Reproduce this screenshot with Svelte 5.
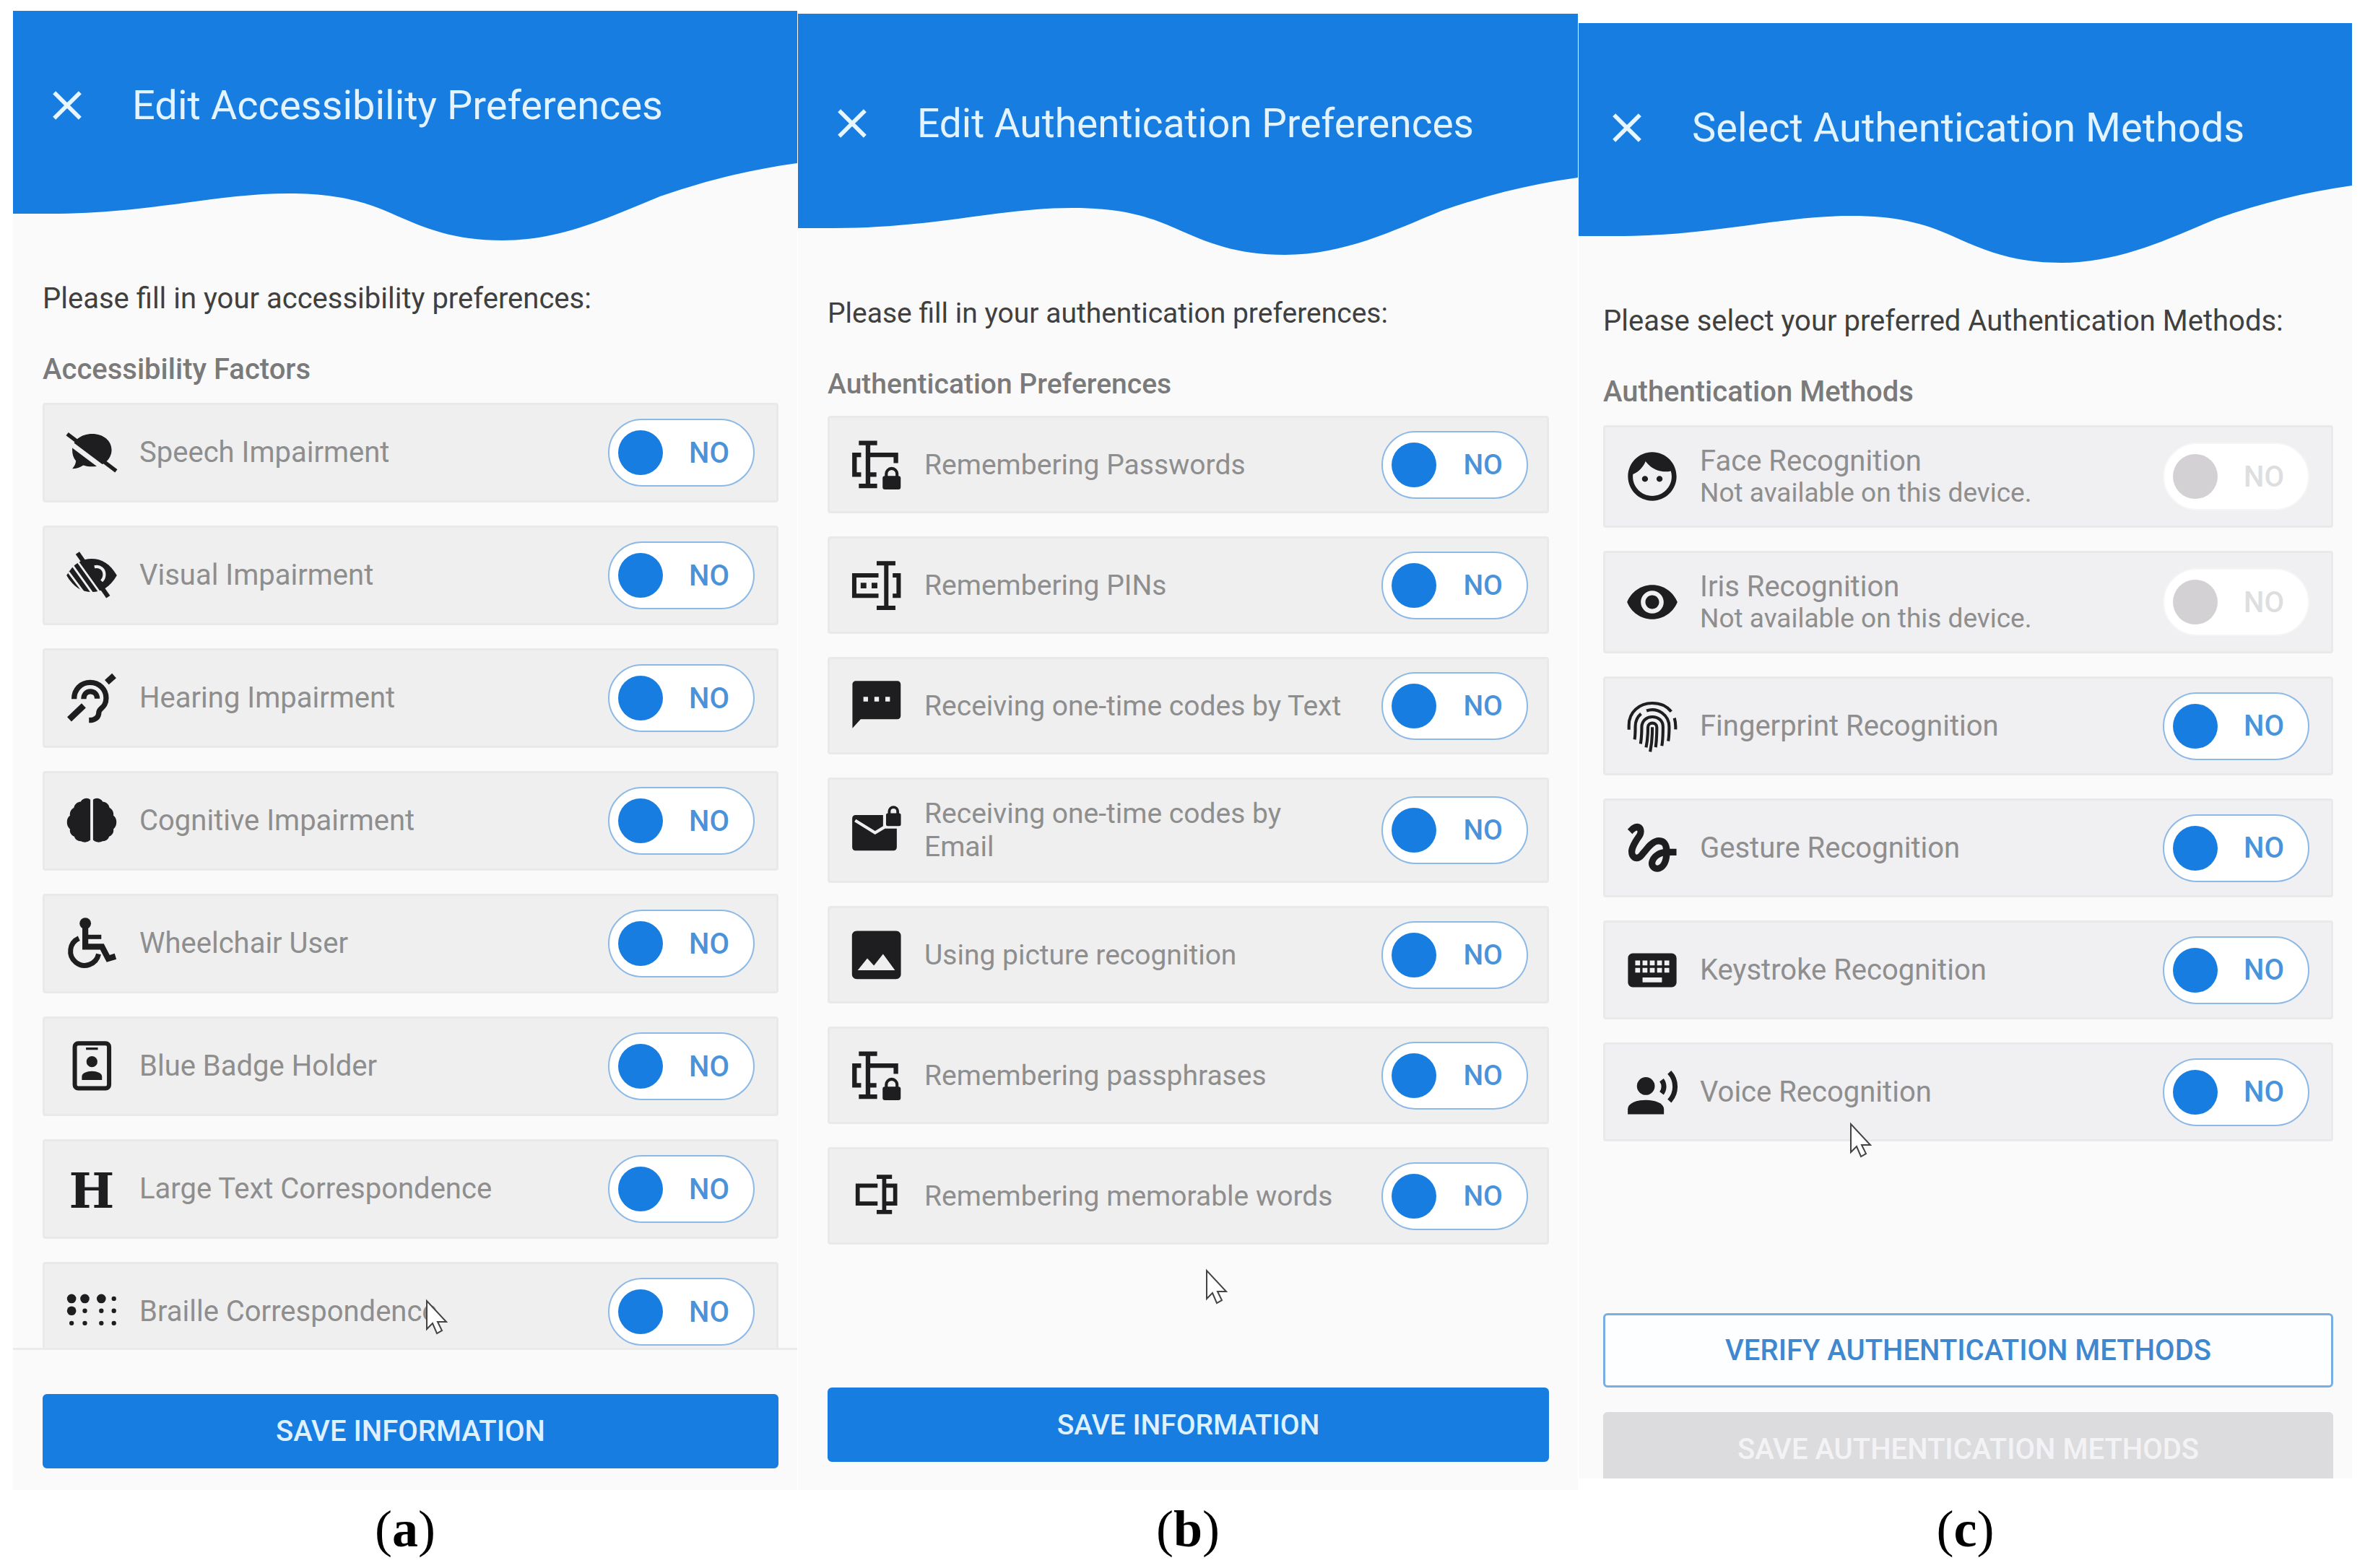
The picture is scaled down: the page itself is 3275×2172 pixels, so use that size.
<script lang="ts">
  type Item = { icon: string; label: string; note?: string; on?: boolean };
  type Action = { text: string; kind: 'solid' | 'outline' | 'disabled' };
  type Screen = {
    key: string;
    title: string;
    intro: string;
    heading: string;
    items: Item[];
    actions: Action[];
    pointer: { x: number; y: number };
  };

  const screens: Screen[] = $state([
    {
      key: 'a',
      title: 'Edit Accessibility Preferences',
      intro: 'Please fill in your accessibility preferences:',
      heading: 'Accessibility Factors',
      items: [
        { icon: 'speech', label: 'Speech Impairment' },
        { icon: 'visual', label: 'Visual Impairment' },
        { icon: 'hearing', label: 'Hearing Impairment' },
        { icon: 'brain', label: 'Cognitive Impairment' },
        { icon: 'wheelchair', label: 'Wheelchair User' },
        { icon: 'badge', label: 'Blue Badge Holder' },
        { icon: 'large-text', label: 'Large Text Correspondence' },
        { icon: 'braille', label: 'Braille Correspondence' },
      ],
      actions: [{ text: 'SAVE INFORMATION', kind: 'solid' }],
      pointer: { x: 571, y: 1784 },
    },
    {
      key: 'b',
      title: 'Edit Authentication Preferences',
      intro: 'Please fill in your authentication preferences:',
      heading: 'Authentication Preferences',
      items: [
        { icon: 'password', label: 'Remembering Passwords' },
        { icon: 'pin', label: 'Remembering PINs' },
        { icon: 'chat', label: 'Receiving one-time codes by Text' },
        { icon: 'mail', label: 'Receiving one-time codes by Email' },
        { icon: 'picture', label: 'Using picture recognition' },
        { icon: 'password', label: 'Remembering passphrases' },
        { icon: 'words', label: 'Remembering memorable words' },
      ],
      actions: [{ text: 'SAVE INFORMATION', kind: 'solid' }],
      pointer: { x: 564, y: 1738 },
    },
    {
      key: 'c',
      title: 'Select Authentication Methods',
      intro: 'Please select your preferred Authentication Methods:',
      heading: 'Authentication Methods',
      items: [
        { icon: 'face', label: 'Face Recognition', note: 'Not available on this device.' },
        { icon: 'eye', label: 'Iris Recognition', note: 'Not available on this device.' },
        { icon: 'fingerprint', label: 'Fingerprint Recognition' },
        { icon: 'gesture', label: 'Gesture Recognition' },
        { icon: 'keyboard', label: 'Keystroke Recognition' },
        { icon: 'voice', label: 'Voice Recognition' },
      ],
      actions: [
        { text: 'VERIFY AUTHENTICATION METHODS', kind: 'outline' },
        { text: 'SAVE AUTHENTICATION METHODS', kind: 'disabled' },
      ],
      pointer: { x: 375, y: 1522 },
    },
  ]);
</script>

{#snippet icon(name: string)}
  {#if name === 'gesture'}
    <svg class="icon" viewBox="1.8 2 20.4 20.4" aria-hidden="true">
      <path d="M4.59 6.89c.7-.71 1.4-1.35 1.71-1.22.5.2 0 1.03-.3 1.52-.25.42-2.86 3.89-2.86 6.31 0 1.28.48 2.34 1.34 2.98.75.56 1.74.73 2.64.46 1.07-.31 1.95-1.4 3.06-2.77 1.21-1.49 2.83-3.44 4.08-3.44 1.63 0 1.65 1.01 1.76 1.79-3.78.64-5.38 3.67-5.38 5.37 0 1.7 1.44 3.09 3.21 3.09 1.63 0 4.29-1.33 4.69-6.1H21v-2.5h-2.47c-.15-1.65-1.09-4.2-4.03-4.2-2.25 0-4.18 1.91-4.94 2.84-.58.73-2.06 2.48-2.29 2.72-.25.3-.68.84-1.11.84-.45 0-.72-.83-.36-1.92.35-1.09 1.4-2.86 1.85-3.52.78-1.14 1.3-1.92 1.3-3.28C8.95 3.69 7.31 3 6.44 3 5.12 3 3.97 4 3.72 4.25c-.36.36-.66.66-.88.93l1.75 1.71zm9.29 11.66c-.31 0-.74-.26-.74-.72 0-.6.73-2.2 2.87-2.76-.3 2.69-1.43 3.48-2.13 3.48z" />
    </svg>
  {:else if name === 'keyboard'}
    <svg class="icon" viewBox="0.7 0.7 22.6 22.6" aria-hidden="true">
      <path d="M20 5H4c-1.1 0-1.99.9-1.99 2L2 17c0 1.1.9 2 2 2h16c1.1 0 2-.9 2-2V7c0-1.1-.9-2-2-2zm-9 3h2v2h-2V8zm0 3h2v2h-2v-2zM8 8h2v2H8V8zm0 3h2v2H8v-2zm-1 2H5v-2h2v2zm0-3H5V8h2v2zm9 7H8v-2h8v2zm0-4h-2v-2h2v2zm0-3h-2V8h2v2zm3 3h-2v-2h2v2zm0-3h-2V8h2v2z" />
    </svg>
  {:else if name === 'face'}
    <svg class="icon" viewBox="0.7 0.7 22.6 22.6" aria-hidden="true">
      <path d="M9 11.75c-.69 0-1.25.56-1.25 1.25s.56 1.25 1.25 1.25 1.25-.56 1.25-1.25-.56-1.25-1.25-1.25zm6 0c-.69 0-1.25.56-1.25 1.25s.56 1.25 1.25 1.25 1.25-.56 1.25-1.25-.56-1.25-1.25-1.25zM12 2C6.48 2 2 6.48 2 12s4.48 10 10 10 10-4.48 10-10S17.52 2 12 2zm0 18c-4.41 0-8-3.59-8-8 0-.29.02-.58.05-.86 2.36-1.05 4.23-2.98 5.21-5.37C11.07 8.33 14.05 10 17.42 10c.78 0 1.53-.09 2.25-.26.21.71.33 1.47.33 2.26 0 4.41-3.59 8-8 8z" />
    </svg>
  {:else}
    <svg class="icon" viewBox="0 0 24 24" aria-hidden="true">
      {#if name === 'speech'}
        <path d="M12.2 3.8c4.9 0 8.5 3 8.5 7s-3.600 7.300-8.500 7.300c-1.400 0-2.800-.2-3.900-.6-1.400.9-2.900 1.500-4.800 1.500 1-1.200 1.500-2.200 1.600-3.400C3.900 14.200 3.500 12.600 3.500 10.800c0-4 3.800-7 8.700-7z" />
        <path class="gap" stroke-width="2.200" d="M.5 6.300l21 15.800" />
        <path class="gap" stroke-width="2.400" d="M2.500 3v6" />
        <path class="line" stroke-width="1.700" d="M1.300 3.800l21.400 16.200" />
      {:else if name === 'visual'}
        <path d="M1 12C4 6.800 7.700 4.700 12 4.700S20 6.800 23 12c-3 5.200-6.700 7.300-11 7.300S4 17.200 1 12z" />
        <path class="gap" stroke-width="1.300" d="M13.200 8.300c2.400-.6 4.300 1 4.300 3.300 0 1.300-.5 2.200-1.200 2.900" />
        <path class="gap" stroke-width=".9" d="M4.300 3.800l12.600 17.600M3.700 7.800l9 12.600M1.900 10.600l7.300 9.800" />
        <path class="line" stroke-width="2" d="M5.800 2.200l13.400 19.200" />
      {:else if name === 'hearing'}
        <g class="line" stroke-width="2.300">
          <path d="M4.300 12.400C4.300 8.200 7.300 5.200 11.300 5.200s7 3 7 6.800c0 4.300-3.200 4.300-3.200 6.400 0 2-1.600 3.300-4.300 3.300" />
          <path d="M8.500 12.400c0-2 1.200-3.300 2.900-3.300s3 1.200 3 3.100" />
          <path stroke-width="2.700" d="M2.200 21.300l6.300-6M18.600 5.100L21.800 2.200" />
        </g>
      {:else if name === 'brain'}
        <path d="M11.400 2.800v17.600c-1 1-2.700 1.300-4 .5-1.500.1-2.600-.7-3-2C2.900 18.200 2.300 17 2.500 15.600 1.500 14.800 1.100 13.600 1.200 12.300c0-1.100.5-2 1.300-2.600C2.300 8.200 3 6.900 4.200 6.300 4.500 4.700 5.700 3.700 7.200 3.600c.9-1.600 3.200-1.900 4.200-.8z" />
        <path d="M12.600 2.800v17.600c1 1 2.700 1.300 4 .5 1.500.1 2.600-.7 3-2 1.500-.7 2.100-1.900 1.900-3.300 1-.8 1.400-2 1.300-3.300 0-1.100-.5-2-1.300-2.600.2-1.500-.5-2.800-1.700-3.400-.3-1.600-1.500-2.600-3-2.700-.9-1.600-3.200-1.900-4.200-.8z" />
      {:else if name === 'wheelchair'}
        <circle cx="9.200" cy="3.200" r="2.500" />
        <path class="line" stroke-width="2.600" d="M9.200 5v8.400h7.300l2.700 5.200 3.200-1" />
        <path class="line" stroke-width="1.900" d="M9 9.100h7.200" />
        <path class="line" stroke-width="2.200" d="M6.400 9.700a6.200 6.200 0 1 0 8.600 6.900" />
      {:else if name === 'badge'}
        <rect class="line" stroke-width="1.900" x="4.600" y="2" width="15" height="19.600" rx="1.500" />
        <circle cx="12.100" cy="10" r="2.400" />
        <path d="M7.700 18v-1.600c0-1.400 2.200-2.300 4.400-2.300s4.400.9 4.400 2.300V18zM9.500 3.800h5.200v1H9.500z" />
      {:else if name === 'large-text'}
        <text class="slab" x="12" y="20.300" text-anchor="middle">H</text>
      {:else if name === 'braille'}
        <circle cx="3.200" cy="6.300" r="2" />
        <circle cx="9" cy="6.300" r="2" />
        <circle cx="16.200" cy="6.300" r="2" />
        <circle cx="21.700" cy="6.300" r="1" />
        <circle cx="3.200" cy="11.600" r="2" />
        <circle cx="9" cy="11.600" r="1" />
        <circle cx="16.200" cy="11.600" r="1" />
        <circle cx="21.700" cy="11.600" r="1" />
        <circle cx="3.200" cy="17" r="1" />
        <circle cx="9" cy="17" r="1" />
        <circle cx="16.200" cy="17" r="1" />
        <circle cx="21.700" cy="17" r="1" />
      {:else if name === 'password'}
        <path class="line" stroke-width="2" d="M4.200 2.400h8M8.200 2.400v18.800M4.200 21.200h8M5.200 7.600H2.300v8.600h2.900M8.200 7.600h12.200v3.600M8.200 16.200h3.700" />
        <rect x="14.600" y="16.800" width="7.900" height="5.900" rx="1" />
        <path class="line" stroke-width="1.300" d="M16.200 17.200v-1.300a2.350 2.350 0 0 1 4.700 0v1.300" />
      {:else if name === 'pin'}
        <path class="line" stroke-width="1.900" d="M12.800 7.600H2.200v8.900h10.600M19 7.600h2.600v8.900H19M12 2.300h8.200M16.200 2.300v19.500M12 21.800h8.200" />
        <path d="M5 10.800h2.500v2.500H5zM9.800 10.800h2.500v2.500H9.800z" />
      {:else if name === 'chat'}
        <path fill-rule="evenodd" d="M3 1h18c.9 0 1.500.6 1.500 1.500v13.800c0 .9-.6 1.500-1.500 1.500H5L1.400 21.700V2.500C1.400 1.600 2.100 1 3 1zM6.200 8v2h2V8zm4.800 0v2h2V8zm4.800 0v2h2V8z" />
      {:else if name === 'mail'}
        <path d="M2.800 5.400h12v5.900h6V19.400c0 .9-.6 1.500-1.500 1.500H2.800c-.9 0-1.500-.6-1.500-1.500V6.900c0-.9.600-1.500 1.500-1.500z" />
        <path class="gap" stroke-width="1.300" d="M2.600 7.700l8.700 5.400 4-2.400" />
        <rect x="16.100" y="4.600" width="6.500" height="5.600" rx=".8" />
        <path class="line" stroke-width="1.200" d="M17.500 5V3.800a1.850 1.850 0 0 1 3.700 0V5" />
      {:else if name === 'picture'}
        <path fill-rule="evenodd" d="M3.300 1.400h17.200c1.200 0 2.100.9 2.100 2.100v16.900c0 1.200-.9 2.100-2.100 2.100H3.300c-1.200 0-2.100-.9-2.100-2.100V3.500c0-1.200.9-2.100 2.100-2.100zM3.700 18.600h16.300l-5.200-7.100-4 5.100-2.900-3.200z" />
      {:else if name === 'words'}
        <path class="line" stroke-width="1.800" d="M12.400 7.400H3.700v7.800h8.700M15.300 7.400h4.800v7.800h-4.800M12 3.500h6.700M15.300 3.500v15.400M12 18.900h6.700" />
      {:else if name === 'eye'}
        <path d="M12 4.500C7 4.500 2.730 7.610 1 12c1.730 4.390 6 7.500 11 7.500s9.270-3.110 11-7.500c-1.730-4.390-6-7.500-11-7.500zM12 17c-2.760 0-5-2.240-5-5s2.240-5 5-5 5 2.240 5 5-2.240 5-5 5zm0-8c-1.660 0-3 1.340-3 3s1.340 3 3 3 3-1.340 3-3-1.340-3-3-3z" />
      {:else if name === 'fingerprint'}
        <g class="line" stroke-width="1.300">
          <path d="M1.800 13.500v-2C1.800 5.800 6.300 1.900 12 1.900c3.500 0 6.400 1.300 8.300 3.700M21.700 8.400c.4 1.400.6 3 .5 5" />
          <path d="M4.300 17.800c.3-2 .3-3.600.3-5.800 0-2.200 1-4.200 2.500-5.500M9.500 5.200c5-1.600 9.900 1.900 9.900 7.100 0 2.200 0 4-.4 6.200" />
          <path d="M6.900 19.700c.4-2.400.5-4.700.5-7.300 0-6 9.300-6 9.300-.2 0 3 0 5.400-.5 8.400" />
          <path d="M9.300 21.300c.6-2.900.8-5.700.8-8.800 0-2.500 3.900-2.500 3.900 0 0 3.100-.1 5.700-.5 8.700" />
          <path d="M12 12.400c.1 4-.2 7.200-.9 10.800" />
        </g>
      {:else if name === 'voice'}
        <circle cx="9.200" cy="9.300" r="3.900" />
        <path d="M1.300 21.600v-2.200c0-2.600 3.700-4 7.900-4s7.900 1.400 7.900 4v2.200z" />
        <path class="line" stroke-width="2.200" d="M16.100 6.700c1.300 1.700 1.300 4 0 5.700M19.500 3.300c3.300 3.500 3.300 9 0 12.500" />
      {/if}
    </svg>
  {/if}
{/snippet}

<main class="page">
  {#each screens as screen (screen.key)}
    <figure class="column {screen.key}">
      <section class="screen" aria-label={screen.title}>
        <header>
          <div class="bar">
            <button class="close" type="button" aria-label="Close">
              <svg viewBox="0 0 24 24" aria-hidden="true">
                <path d="M19 6.410L17.590 5 12 10.590 6.410 5 5 6.410 10.590 12 5 17.590 6.410 19 12 13.410 17.590 19 19 17.590 13.410 12z" />
              </svg>
            </button>
            <h1>{screen.title}</h1>
          </div>
          <svg class="wave" viewBox="0 0 1086 110" preserveAspectRatio="none" aria-hidden="true">
            <path d="M0 0H1086C1020 9 960 24 896 46 830 73 760 107 678 107 610 107 570 90 525 70 485 52 445 42 382 42 280 42 190 70 50 70H0z" />
          </svg>
        </header>

        <p class="intro">{screen.intro}</p>
        <h2>{screen.heading}</h2>

        <div class="list">
          {#each screen.items as item (item.label)}
            <label class="row" class:unavailable={item.note}>
              {@render icon(item.icon)}
              <span class="label">
                {item.label}
                {#if item.note}<small>{item.note}</small>{/if}
              </span>
              <span class="toggle" class:on={item.on}>
                <input type="checkbox" role="switch" bind:checked={item.on} disabled={!!item.note} />
                <span>{item.on ? 'YES' : 'NO'}</span>
              </span>
            </label>
          {/each}
        </div>

        <footer>
          {#each screen.actions as action (action.text)}
            <button class="action {action.kind}" type="button" disabled={action.kind === 'disabled'}>
              {action.text}
            </button>
          {/each}
        </footer>

        <svg
          class="pointer"
          viewBox="0 0 32 52"
          style="left: {screen.pointer.x}px; top: {screen.pointer.y}px"
          aria-hidden="true"
        >
          <path d="M2 3v39l8-8 6 14 7-4-6-12h12z" />
        </svg>
      </section>
      <figcaption>(<b>{screen.key}</b>)</figcaption>
    </figure>
  {/each}
</main>

<style>
  :global(body) {
    background: #fff;
  }

  .page {
    display: grid;
    grid-template-columns: 1086fr 1080fr 1071fr;
    column-gap: 1px;
    box-sizing: border-box;
    height: 100vh;
    padding: 0 18px;
    font-family: Roboto, 'Liberation Sans', sans-serif;
  }

  /* Each screen was taken on a slightly different canvas. */
  .column {
    --top: 15px;
    --bottom: 0px;
    --left: 41px;
    --right: 26px;
    --text: 40px;
    --title: 56px;
    --row: 138px;
    display: flex;
    flex-direction: column;
    min-width: 0;
    min-height: 0;
    margin: 0;
  }

  .b {
    --top: 19px;
    --right: 40px;
    --text: 39px;
    --title: 55px;
    --row: 135px;
  }

  .c {
    --top: 32px;
    --bottom: 16px;
    --left: 34px;
    --row: 137px;
  }

  .screen {
    position: relative;
    display: flex;
    flex: 1;
    flex-direction: column;
    min-height: 0;
    margin: var(--top) 0 var(--bottom);
    overflow: hidden;
    background: #fafafa;
    font-size: var(--text);
  }

  .bar {
    display: flex;
    align-items: center;
    gap: 56px;
    padding: 97px 41px 46px;
    background: #177de1;
  }

  .b .bar {
    padding-top: 118px;
    padding-bottom: 41px;
  }

  .c .bar {
    padding: 111px 33px 46px;
  }

  .close {
    width: 68px;
    height: 68px;
    padding: 0;
    border: 0;
    background: none;
  }

  .close svg {
    display: block;
    fill: #e8f6ff;
  }

  h1 {
    margin: 0;
    font-size: var(--title);
    font-weight: 400;
    line-height: 68px;
    color: #e3f3ff;
    white-space: nowrap;
  }

  .wave {
    display: block;
    width: 100%;
    height: 110px;
    fill: #177de1;
  }

  .intro {
    margin: 54px var(--right) 0 var(--left);
    line-height: 48px;
    color: #404040;
    white-space: nowrap;
  }

  h2 {
    margin: 50px var(--right) 22px var(--left);
    font-size: inherit;
    font-weight: 500;
    line-height: 48px;
    color: #7a7a7a;
  }

  .b h2 {
    margin-bottom: 20px;
  }

  .list {
    display: flex;
    flex: 1;
    flex-direction: column;
    gap: 32px;
    min-height: 0;
    padding: 0 var(--right) 0 var(--left);
    overflow: hidden;
  }

  .row {
    display: flex;
    flex: none;
    align-items: center;
    gap: 28px;
    box-sizing: border-box;
    min-height: var(--row);
    padding: 24px 30px 24px 27px;
    border: 3px solid #e9e9e9;
    border-radius: 4px;
    background: #efefef;
  }

  .b .row {
    padding-right: 26px;
  }

  .c .row {
    background: #f0eff1;
  }

  .icon {
    flex: none;
    width: 76px;
    height: 76px;
    overflow: visible;
    fill: #1e1e20;
  }

  .line {
    fill: none;
    stroke: #1e1e20;
  }

  .gap {
    fill: none;
    stroke: #efefef;
  }

  .slab {
    font: bold 21px/24px 'DejaVu Serif', serif;
  }

  .label {
    flex: 1;
    padding-right: 14px;
    line-height: 46px;
    color: #8e8e8e;
  }

  small {
    display: block;
    font-size: 37px;
    line-height: 42px;
  }

  .toggle {
    display: flex;
    align-items: center;
    justify-content: space-between;
    box-sizing: border-box;
    width: 203px;
    height: 94px;
    /* keeps the pill from stretching the row */
    margin: -8px 0;
    padding: 0 33px 0 12px;
    border: 2px solid #8db9e6;
    border-radius: 47px;
    background: #fff;
    font-weight: 500;
    color: #4a93da;
  }

  .toggle.on {
    flex-direction: row-reverse;
    padding: 0 12px 0 26px;
  }

  .toggle input {
    appearance: none;
    width: 62px;
    height: 62px;
    margin: 0;
    border-radius: 50%;
    background: #177de1;
  }

  .unavailable .toggle {
    border-color: #f6f5f6;
    color: #dedede;
  }

  .unavailable .toggle input {
    background: #d3d1d3;
  }

  footer {
    display: flex;
    flex-direction: column;
    gap: 34px;
    padding: 61px var(--right) 30px var(--left);
    border-top: 3px solid #ebebeb;
  }

  .b footer {
    padding-bottom: 39px;
    border: 0;
  }

  /* The last button runs under the screen's lower edge. */
  .c footer {
    margin-bottom: -11px;
    padding-bottom: 0;
    border: 0;
  }

  .action {
    height: 103px;
    padding: 0;
    border: 3px solid #177de1;
    border-radius: 6px;
    background: #177de1;
    font: 500 var(--text) Roboto, 'Liberation Sans', sans-serif;
    color: #dff0ff;
  }

  .outline {
    border-color: #78aee2;
    background: #fdfeff;
    color: #3f88cf;
  }

  .disabled {
    border-color: #dcdcde;
    background: #dcdcde;
    color: #f3f3f5;
  }

  .pointer {
    position: absolute;
    width: 32px;
    height: 52px;
    fill: #fff;
    stroke: #444;
    stroke-width: 2;
  }

  figcaption {
    flex: none;
    font: 72px/108px 'Liberation Serif', serif;
    text-align: center;
    color: #000;
  }
</style>
